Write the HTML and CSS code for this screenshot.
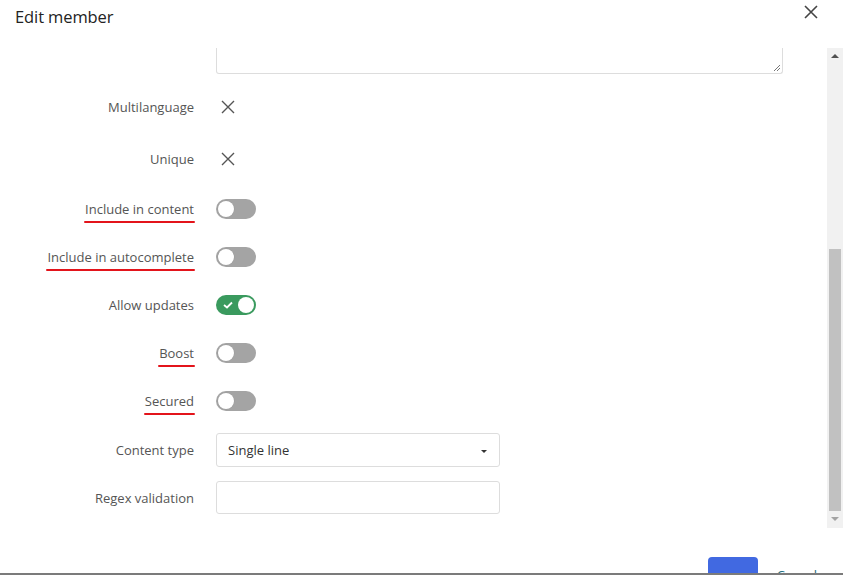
FILE: index.html
```html
<!DOCTYPE html>
<html>
<head>
<meta charset="utf-8">
<link rel="stylesheet" href="styles.css">
</head>
<body>
<div class="modal">
  <div class="header">
    <h1 class="title">Edit member</h1>
    <button class="close" aria-label="Close">
      <svg width="14" height="14" viewBox="0 0 14 14"><path d="M1 1L13 13M13 1L1 13" stroke="#444" stroke-width="1.6" fill="none"/></svg>
    </button>
  </div>
  <div class="body">
    <div class="content">
      <div class="textarea-stub">
        <svg class="grip" width="8" height="8" viewBox="0 0 8 8"><path d="M7 1L1 7M7 4L4 7" stroke="#777" stroke-width="1" fill="none"/></svg>
      </div>
      <div class="row tall">
        <div class="label"><span>Multilanguage</span></div>
        <div class="control"><svg class="xicon" width="14" height="14" viewBox="0 0 14 14"><path d="M1 1L13 13M13 1L1 13" stroke="#555" stroke-width="1.4" fill="none"/></svg></div>
      </div>
      <div class="row tall">
        <div class="label"><span>Unique</span></div>
        <div class="control"><svg class="xicon" width="14" height="14" viewBox="0 0 14 14"><path d="M1 1L13 13M13 1L1 13" stroke="#555" stroke-width="1.4" fill="none"/></svg></div>
      </div>
      <div class="row">
        <div class="label"><span class="mark">Include in content</span></div>
        <div class="control"><span class="toggle"><span class="knob"></span></span></div>
      </div>
      <div class="row">
        <div class="label"><span class="mark">Include in autocomplete</span></div>
        <div class="control"><span class="toggle"><span class="knob"></span></span></div>
      </div>
      <div class="row">
        <div class="label"><span>Allow updates</span></div>
        <div class="control"><span class="toggle on">
          <svg class="check" width="10" height="8" viewBox="0 0 10 8"><path d="M1 4L4 6.5L9 1.5" stroke="#fff" stroke-width="1.8" fill="none"/></svg>
          <span class="knob"></span></span></div>
      </div>
      <div class="row">
        <div class="label"><span class="mark">Boost</span></div>
        <div class="control"><span class="toggle"><span class="knob"></span></span></div>
      </div>
      <div class="row">
        <div class="label"><span class="mark">Secured</span></div>
        <div class="control"><span class="toggle"><span class="knob"></span></span></div>
      </div>
      <div class="row field first">
        <div class="label"><span>Content type</span></div>
        <div class="control"><div class="select">Single line<span class="caret"></span></div></div>
      </div>
      <div class="row field second">
        <div class="label"><span>Regex validation</span></div>
        <div class="control"><div class="input"></div></div>
      </div>
    </div>
    <div class="scrollbar">
      <div class="arrow up"></div>
      <div class="track"><div class="thumb"></div></div>
      <div class="arrow down"></div>
    </div>
  </div>
  <div class="footer">
    <button class="save">Save</button>
    <button class="cancel">Cancel</button>
  </div>
</div>
</body>
</html>
```
FILE: styles.css
```css
* { box-sizing: border-box; }
html, body { margin: 0; padding: 0; background: #fff; }
body {
  font-family: "Open Sans", "Noto Sans", "Liberation Sans", sans-serif;
  color: #555;
  width: 843px;
  height: 575px;
  overflow: hidden;
}
.modal {
  height: 575px;
  display: flex;
  flex-direction: column;
  border-bottom: 2px solid #7b7b7b;
  overflow: hidden;
}
.header {
  height: 48px;
  flex: none;
  display: flex;
  justify-content: space-between;
  align-items: flex-start;
  padding: 0 25px 0 15px;
}
.title {
  margin: 5px 0 0;
  font-size: 16.5px;
  font-weight: 400;
  color: #222;
  letter-spacing: -0.1px;
}
.close {
  margin-top: 5px;
  padding: 0;
  border: 0;
  background: none;
  width: 14px;
  height: 14px;
  display: block;
}
.close svg { display: block; }
.body {
  height: 480px;
  flex: none;
  display: flex;
}
.content {
  flex: 1;
}
.textarea-stub {
  margin-left: 216px;
  width: 567px;
  height: 26px;
  border: 1px solid #ddd;
  border-top: 0;
  border-radius: 0 0 3px 3px;
  position: relative;
}
.grip { position: absolute; right: 1px; bottom: 1px; }
.row {
  height: 48px;
  display: grid;
  grid-template-columns: 194px 1fr;
  column-gap: 22px;
  align-items: center;
}
.row.tall { height: 52px; }
.textarea-stub + .row { margin-top: 7px; }
.label {
  text-align: right;
  font-size: 13px;
  line-height: 16px;
}
.label span { display: inline-block; position: relative; }
.mark::after {
  content: "";
  position: absolute;
  left: -1px;
  right: -1px;
  bottom: -6px;
  height: 2.5px;
  border-radius: 2px;
  background: #e3141b;
}
.control { display: flex; align-items: center; }
.xicon { margin-left: 5px; display: block; }
.toggle {
  width: 40px;
  height: 20px;
  border-radius: 10px;
  background: #a4a4a4;
  position: relative;
  display: block;
}
.knob {
  position: absolute;
  top: 2px;
  left: 2px;
  width: 16px;
  height: 16px;
  border-radius: 50%;
  background: #fff;
  box-shadow: 0 0 0 0.5px #999;
}
.toggle.on { background: #3a9a5e; }
.toggle.on .knob { left: 22px; box-shadow: none; }
.check { position: absolute; left: 7px; top: 6px; }
.row.field { height: auto; }
.row.field.first { padding-top: 8px; }
.row.field.second { margin-top: 14px; }
.select, .input {
  width: 284px;
  height: 34px;
  border: 1px solid #ddd;
  border-radius: 3px;
  font-size: 13px;
  color: #333;
  display: flex;
  align-items: center;
  padding-left: 11px;
  position: relative;
}
.input { height: 33px; }
.caret {
  position: absolute;
  right: 12px;
  top: 16px;
  width: 0;
  height: 0;
  border-left: 3px solid transparent;
  border-right: 3px solid transparent;
  border-top: 3px solid #333;
}
.scrollbar {
  width: 16px;
  flex: none;
  background: #f1f1f1;
  display: flex;
  flex-direction: column;
}
.arrow {
  height: 17px;
  flex: none;
  position: relative;
}
.arrow::after {
  content: "";
  position: absolute;
  left: 4px;
  width: 0;
  height: 0;
  border-left: 4px solid transparent;
  border-right: 4px solid transparent;
}
.arrow.up::after { top: 6px; border-bottom: 4px solid #505050; }
.arrow.down::after { top: 6px; border-top: 4px solid #a3a3a3; }
.track { flex: 1; padding: 184px 2px 0; }
.thumb { height: 262px; background: #c1c1c1; }
.footer {
  flex: 1;
  display: flex;
  justify-content: flex-end;
  align-items: flex-start;
  padding: 29px 26px 0 0;
  gap: 19px;
}
.save {
  width: 50px;
  height: 34px;
  background: #4169e1;
  color: #fff;
  border: 0;
  border-radius: 4px;
  font: 13px/18px "Open Sans", sans-serif;
  padding: 10px 0 0;
  display: block;
}
.cancel {
  background: none;
  border: 0;
  color: #1e6f7f;
  font: 13px/18px "Open Sans", sans-serif;
  padding: 9px 0 0;
  display: block;
}
```
